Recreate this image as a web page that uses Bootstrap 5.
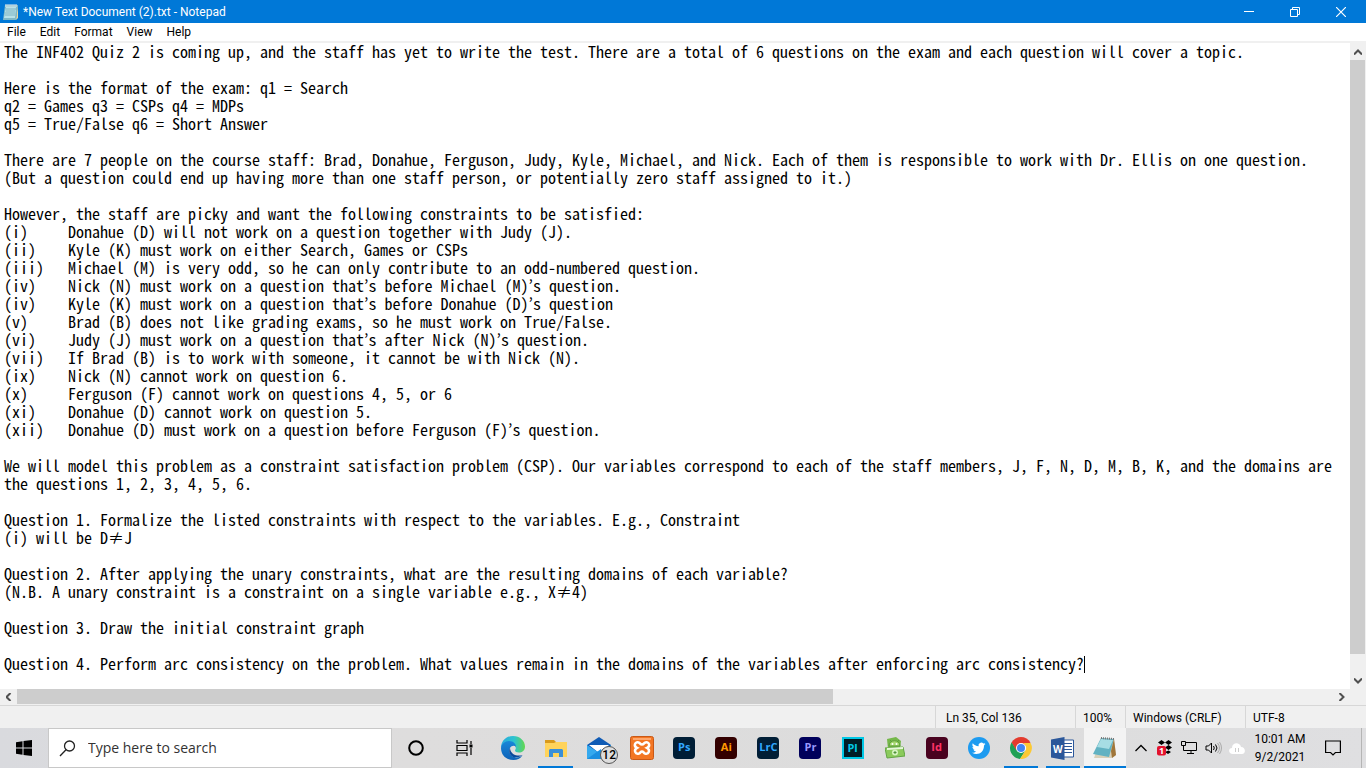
<!DOCTYPE html>
<html lang="en">
<head>
<meta charset="utf-8">
<meta name="viewport" content="width=device-width, initial-scale=1">
<title>*New Text Document (2).txt - Notepad</title>
<link href="https://cdn.jsdelivr.net/npm/bootstrap@5.3.0/dist/css/bootstrap.min.css" rel="stylesheet">
<style>
  body { font-family: Roboto, "Noto Sans", sans-serif; font-size: 12px; line-height: 16px; color: #000; background: #fff; }
  button { border: 0; background: transparent; padding: 0; color: inherit; }
  svg { display: block; flex: none; }
  .title-bar { height: 23px; background: #0078d7; color: #fff; padding: 0 2px 0 3px; }
  .title-bar h1 { font-size: 12px; line-height: 16px; font-weight: 400; margin: 0 0 0 4px; }
  .win-btn { width: 46px; height: 23px; display: grid; place-items: center; }
  .menu-bar { height: 20px; border-bottom: 2px solid #f0f0f0; padding-left: 7px; gap: 14px; }
  .menu-bar button { line-height: 18px; }
  .page-text { resize: none; border: 0; outline: 0; padding: 0 0 0 4px; margin: -1px 0 0; overflow: hidden; white-space: pre; tab-size: 8;
    font-family: "Noto Sans Mono CJK KR", "Noto Sans Mono CJK SC", "DejaVu Sans Mono", monospace; font-size: 16px; line-height: 18px; font-feature-settings: "hwid"; color: #000; background: #fff; }
  .caret { position: absolute; left: 1084px; top: 613px; width: 1px; height: 17px; background: #000; }
  .bar-y { width: 16px; background: #f0f0f0; padding-right: 1px; }
  .bar-x { height: 16px; background: #f0f0f0; padding-right: 16px; }
  .arrow { width: 17px; height: 17px; display: grid; place-items: center; flex: none; }
  .bar-y .arrow { width: 15px; }
  .bar-x .arrow { height: 15px; }
  .thumb { background: #cdcdcd; }
  .bar-y .thumb { height: 97%; }
  .bar-x .thumb { width: 62%; height: 15px; }
  .status-bar { height: 23px; background: #f0f0f0; border-top: 1px solid #d7d7d7; padding-right: 1px; }
  .status-bar span { border-left: 1px solid #d7d7d7; padding-left: 7px; width: 120px; line-height: 24px; }
  .status-bar .cell-pos { width: 140px; padding-left: 10px; }
  .status-bar .cell-zoom { width: 50px; }
  .task-bar { height: 40px; background: linear-gradient(90deg, #d9dade, #dedddd 30%, #dcdcdc 70%, #dfdfe1); }
  .task-btn { width: 48px; height: 40px; display: grid; place-items: center; flex: none; }
  .search-box { width: 344px; border: 1px solid #c8c8c8; background: #fff; padding-left: 10px; gap: 12px; }
  .search-box input { border: 0; outline: 0; background: transparent; font-family: "Open Sans", sans-serif; font-size: 14px; line-height: 20px; padding: 0; width: 240px; }
  .search-box input::placeholder { color: #333; opacity: 1; }
  .app-list { margin-left: 3px; }
  .app-btn { flex: 1 1 42px; height: 40px; display: grid; place-items: center; position: relative; }
  .wide-app { flex-basis: 43px; }
  .open-app::after { content: ""; position: absolute; left: 4px; right: 4px; bottom: 0; height: 2px; background: #0078d7; }
  .active-app { background: #f3f3f3; }
  .active-app::after { left: 0; right: 0; }
  .tile { width: 22px; height: 22px; border-radius: 4px; font-family: "Open Sans", sans-serif; font-weight: 700; font-size: 11px; line-height: 20px; text-align: center; }
  .tile-ps { background: #001e36; color: #31a8ff; }
  .tile-ai { background: #330000; color: #ff9a00; }
  .tile-pr { background: #00005b; color: #9999ff; }
  .tile-pl { background: #001d26; color: #00c8e6; border: 2px solid #00c8e6; border-radius: 0; line-height: 17px; }
  .tile-id { background: #49021f; color: #ff3366; }
  .mail-count { position: absolute; right: 2px; bottom: 4px; width: 18px; height: 18px; border: 1px solid #555; border-radius: 50%; background: #ddd; font-size: 12px; line-height: 16px; text-align: center; font-weight: 500; }
  .tray { padding-left: 3px; }
  .tray-btn { width: 24px; height: 40px; display: grid; place-items: center; position: relative; }
  .clock { width: 62px; line-height: 18px; text-align: center; }
  .notice-btn { width: 44px; }
  .desk-btn { width: 5px; margin-left: 6px; height: 40px; border-left: 1px solid #b5b5b5; }
</style>
</head>
<body>
<div class="d-flex flex-column vh-100 overflow-hidden">
  <header class="title-bar d-flex align-items-center">
    <svg width="16" height="18" viewBox="0 0 16 18"><path d="M2 2h13l-2 15H0z" fill="#7fb9c8"/><path d="M3 4h10l-1 11H1z" fill="#b9e2e9"/><path d="M3 6h10M3 8h9M2 10h10M2 12h10" stroke="#7db3c2"/><path d="M15 2v13l-2 2z" fill="#e5d6a0"/><path d="M3 1v3M5 1v3M7 1v3M9 1v3M11 1v3M13 1v3" stroke="#e9eef0"/></svg>
    <h1>*New Text Document (2).txt - Notepad</h1>
    <div class="d-flex ms-auto">
      <button class="win-btn" aria-label="Minimize"><svg width="10" height="10"><path d="M0 4.500h10" stroke="#fff"/></svg></button>
      <button class="win-btn" aria-label="Restore"><svg width="10" height="10" fill="none" stroke="#fff"><path d="M.5 2.500h7v7h-7zM2.500 2.500v-2h7v7h-2"/></svg></button>
      <button class="win-btn" aria-label="Close"><svg width="10" height="10"><path d="M0 0l10 10M10 0L0 10" stroke="#fff" stroke-width="1.200"/></svg></button>
    </div>
  </header>
  <nav class="menu-bar d-flex align-items-center" aria-label="Menu">
    <button>File</button><button>Edit</button><button>Format</button><button>View</button><button>Help</button>
  </nav>
  <main class="d-flex flex-grow-1 overflow-hidden position-relative">
    <textarea class="page-text flex-grow-1" aria-label="Document text" spellcheck="false" wrap="off">The INF402 Quiz 2 is coming up, and the staff has yet to write the test. There are a total of 6 questions on the exam and each question will cover a topic.

Here is the format of the exam: q1 = Search
q2 = Games q3 = CSPs q4 = MDPs
q5 = True/False q6 = Short Answer

There are 7 people on the course staff: Brad, Donahue, Ferguson, Judy, Kyle, Michael, and Nick. Each of them is responsible to work with Dr. Ellis on one question.
(But a question could end up having more than one staff person, or potentially zero staff assigned to it.)

However, the staff are picky and want the following constraints to be satisfied:
(i)&#9;Donahue (D) will not work on a question together with Judy (J).
(ii)&#9;Kyle (K) must work on either Search, Games or CSPs
(iii)&#9;Michael (M) is very odd, so he can only contribute to an odd-numbered question.
(iv)&#9;Nick (N) must work on a question that’s before Michael (M)’s question.
(iv)&#9;Kyle (K) must work on a question that’s before Donahue (D)’s question
(v)&#9;Brad (B) does not like grading exams, so he must work on True/False.
(vi)&#9;Judy (J) must work on a question that’s after Nick (N)’s question.
(vii)&#9;If Brad (B) is to work with someone, it cannot be with Nick (N).
(ix)&#9;Nick (N) cannot work on question 6.
(x)&#9;Ferguson (F) cannot work on questions 4, 5, or 6
(xi)&#9;Donahue (D) cannot work on question 5.
(xii)&#9;Donahue (D) must work on a question before Ferguson (F)’s question.

We will model this problem as a constraint satisfaction problem (CSP). Our variables correspond to each of the staff members, J, F, N, D, M, B, K, and the domains are
the questions 1, 2, 3, 4, 5, 6.

Question 1. Formalize the listed constraints with respect to the variables. E.g., Constraint
(i) will be D≠J

Question 2. After applying the unary constraints, what are the resulting domains of each variable?
(N.B. A unary constraint is a constraint on a single variable e.g., X≠4)

Question 3. Draw the initial constraint graph

Question 4. Perform arc consistency on the problem. What values remain in the domains of the variables after enforcing arc consistency?</textarea>
    <span class="caret"></span>
    <div class="bar-y d-flex flex-column">
      <button class="arrow" aria-label="Scroll up"><svg width="8" height="6"><path d="M0 5.500L4 1.500l4 4" fill="none" stroke="#505050" stroke-width="2"/></svg></button>
      <div class="flex-grow-1"><div class="thumb"></div></div>
      <button class="arrow" aria-label="Scroll down"><svg width="8" height="6"><path d="M0 .5l4 4 4-4" fill="none" stroke="#505050" stroke-width="2"/></svg></button>
    </div>
  </main>
  <div class="bar-x d-flex">
    <button class="arrow" aria-label="Scroll left"><svg width="6" height="8"><path d="M4.500 0l-4 4 4 4" fill="none" stroke="#505050" stroke-width="2"/></svg></button>
    <div class="flex-grow-1"><div class="thumb"></div></div>
    <button class="arrow" aria-label="Scroll right"><svg width="6" height="8"><path d="M.5 0l4 4-4 4" fill="none" stroke="#505050" stroke-width="2"/></svg></button>
  </div>
  <div class="status-bar d-flex justify-content-end">
    <span class="cell-pos">Ln 35, Col 136</span><span class="cell-zoom">100%</span><span>Windows (CRLF)</span><span>UTF-8</span>
  </div>
  <footer class="task-bar d-flex">
    <button class="task-btn" aria-label="Start"><svg width="16" height="16"><path d="M0 2.200L6.500 1.300V7.500H0zM7.500 1.100L16 0v7.500H7.500zM0 8.500h6.500v6.200L0 13.800zM7.500 8.500H16V16l-8.500-1.100z"/></svg></button>
    <label class="search-box d-flex align-items-center">
      <svg width="17" height="17" fill="none" stroke="#222" stroke-width="1.300"><circle cx="10.500" cy="6" r="5"/><path d="M7 9.700L1 16"/></svg>
      <input type="text" placeholder="Type here to search" aria-label="Type here to search">
    </label>
    <button class="task-btn" aria-label="Cortana"><svg width="16" height="16"><circle cx="8" cy="8" r="6.800" fill="none" stroke="#000" stroke-width="2"/></svg></button>
    <button class="task-btn" aria-label="Task View"><svg width="17" height="16" fill="none" stroke="#000" stroke-width="1.200"><path d="M1 0v3h10V0M1 5.500h10v5H1zM1 16v-3h10v3M15 1v3M15 8v7"/><path d="M13.500 4.500h3v3h-3z" fill="#000" stroke="none"/></svg></button>
    <div class="app-list d-flex flex-grow-1">
      <button class="app-btn wide-app" aria-label="Edge"><svg width="24" height="24" viewBox="0 0 24 24"><defs><linearGradient id="eg" x1="0" x2="1"><stop offset="0" stop-color="#2aa9dc"/><stop offset=".55" stop-color="#2dc3d0"/><stop offset="1" stop-color="#62d84e"/></linearGradient><linearGradient id="eb" x2="0" y2="1"><stop stop-color="#1887d8"/><stop offset="1" stop-color="#0f62b8"/></linearGradient></defs><path d="M0 12C0 5 5 0 12 0s12 5 12 10.500c0 4-3 6-6 6-2.500 0-4-1-4-2 0-.700.8-1 .8-2.500 0-2-1.800-4-4.800-4C5 8 1 9 0 12z" fill="url(#eg)"/><path d="M0 12c.5-4 4-7 8-7 4.500 0 7 3 7 6-1.500-2-4.500-1.500-6 1-2 4 .5 9 6 9.500 3 .2 5-1 6.500-2-2 3-5.500 4.500-9 4.500C5 24 0 19 0 12z" fill="url(#eb)"/><path d="M9 12c-2.500 4 1 10 7 9.300 2-.2 4-1 5.500-2.300-4 1.500-12 .5-12.500-7z" fill="#0b4a9c"/></svg></button>
      <button class="app-btn wide-app open-app" aria-label="File Explorer"><svg width="22" height="19"><path d="M0 1h9l2 2h10v5H0z" fill="#d99a1c"/><path d="M0 4h9l2-1h11v15H0z" fill="#ffd35b"/><path d="M4 18v-7l1-1h12l1 1v7h-4v-4H8v4z" fill="#3a8fd8"/></svg></button>
      <button class="app-btn wide-app" aria-label="Mail, 12 new"><svg width="24" height="24"><path d="M0 9L12 1l12 8v14H0z" fill="#0f5bb5"/><path d="M2 9h20L12 17z" fill="#fff"/><path d="M0 9l14 9 10-9v14H0z" fill="#35a9ee"/><path d="M0 23L14 13l3 10z" fill="#1c8fe0"/></svg><span class="mail-count">12</span></button>
      <button class="app-btn wide-app" aria-label="XAMPP"><svg width="24" height="24"><rect x=".5" y=".5" width="23" height="23" rx="2" fill="#f37623" stroke="#c95816"/><path d="M3 2h18v2H3z" fill="#ffa66a"/><path d="M8.500 6.500c-4-1-5 4-1.500 5.500-3.500 2-2 6.500 2 5.500 1.500-.5 1.500-2 3-2s1.500 1.500 3 2c4 1 5.500-3.500 2-5.500 3.500-1.500 2.500-6.500-1.500-5.500-2 .5-1.500 2-3.500 2S10.500 7 8.500 6.500z" fill="none" stroke="#fff" stroke-width="2.500"/></svg></button>
      <button class="app-btn" aria-label="Photoshop"><span class="tile tile-ps">Ps</span></button>
      <button class="app-btn" aria-label="Illustrator"><span class="tile tile-ai">Ai</span></button>
      <button class="app-btn" aria-label="Lightroom Classic"><span class="tile tile-ps">LrC</span></button>
      <button class="app-btn" aria-label="Premiere Pro"><span class="tile tile-pr">Pr</span></button>
      <button class="app-btn" aria-label="Prelude"><span class="tile tile-pl">Pl</span></button>
      <button class="app-btn" aria-label="Android tool"><svg width="20" height="22"><path d="M2 2l9-2 5 4-1 8H3z" fill="#75b84a"/><path d="M4 9c0-7 11-7 11 0z" fill="#a5d86f" stroke="#5d9c3b"/><path d="M5 3l2 2M14 3l-2 2" stroke="#5d9c3b"/><circle cx="7.500" cy="7" r="1" fill="#fff"/><circle cx="11.500" cy="7" r="1" fill="#fff"/><path d="M0 11l18-1 2 9-18 2z" fill="#8bca5c" stroke="#62a544"/><path d="M2 11l16-1v2L2 13z" fill="#e6f7d9"/><circle cx="10" cy="15.500" r="3" fill="#d6f3c1"/><path d="M10 14v3M8.500 15.500h3" stroke="#4d9438"/></svg></button>
      <button class="app-btn" aria-label="InDesign"><span class="tile tile-id">Id</span></button>
      <button class="app-btn" aria-label="Twitter"><svg width="22" height="22" viewBox="0 0 22 22"><circle cx="11" cy="11" r="11" fill="#1d9bf0"/><path d="M17.500 7c-.5.2-1 .4-1.500.4.600-.3 1-.8 1.200-1.500-.6.300-1.200.6-1.800.7a2.800 2.800 0 0 0-4.800 2.600C8.200 9.100 6.100 8 4.800 6.300c-.8 1.400-.4 3 .9 3.900-.5 0-.9-.1-1.300-.4 0 1.400 1 2.600 2.300 2.800-.4.100-.8.1-1.300 0 .4 1.200 1.500 2 2.700 2-1.200 1-2.700 1.300-4.100 1.200 5.600 3.400 12.200-.2 12-7.200.6-.4 1.100-1 1.500-1.600z" fill="#fff"/></svg></button>
      <button class="app-btn open-app" aria-label="Chrome"><svg width="22" height="22" viewBox="0 0 22 22"><path d="M1.500 5.500A11 11 0 0 1 20.500 5.500L11 11z" fill="#e33b2e"/><path d="M1.500 5.500A11 11 0 0 0 10 22l5.500-8.500L11 11 6 13z" fill="#1fa055"/><path d="M20.600 6A11 11 0 0 1 10 22l5.500-8.500A5 5 0 0 0 11 6z" fill="#fcc934"/><path d="M1.500 5.500L6.200 13.600 11 11V6h9.500z" fill="#e33b2e"/><path d="M1.500 5.500l5 8L8 18 2 17z" fill="#1fa055"/><circle cx="11" cy="11" r="5" fill="#fff"/><circle cx="11" cy="11" r="4" fill="#4285f4"/></svg></button>
      <button class="app-btn open-app" aria-label="Word"><svg width="23" height="23" viewBox="0 0 23 23"><path d="M11 3h11.500v17H11z" fill="#fff" stroke="#2b579a"/><path d="M13 6.500h8M13 9.500h8M13 12.500h8M13 15.500h8" stroke="#2b579a"/><path d="M0 2.500L13.500 0v23L0 20.500z" fill="#2b579a"/><text x="2" y="15.500" fill="#fff" font-family="Open Sans" font-weight="700" font-size="10">W</text></svg></button>
      <button class="app-btn open-app active-app" aria-label="Notepad"><svg width="24" height="22"><path d="M8 1l13 1 2 16-4 3H1z" fill="#d8d0b8"/><path d="M8 1l13 1-5 18L0 17z" fill="#62b2c2"/><path d="M8 2l12 1-4 9-12-2z" fill="#a7dde4"/><path d="M21 2l2 16-4 3-1-7z" fill="#a0763a"/><path d="M8 1l13 1" stroke="#777" stroke-width="2" stroke-dasharray="1 1"/></svg></button>
    </div>
    <div class="tray d-flex align-items-center">
      <button class="tray-btn" aria-label="Show hidden icons"><svg width="12" height="8"><path d="M0.500 7L6 1.500 11.500 7" fill="none" stroke="#000" stroke-width="1.300"/></svg></button>
      <button class="tray-btn" aria-label="Dropbox, 1 notification"><svg width="16" height="16"><path d="M1 2.500L4.500 0 8 2.500 4.500 5zM8 2.500L11.500 0 15 2.500 11.500 5zM8 7.500L11.500 5 15 7.500l-3.500 2.500zM8 12l3.500-1.500L14 12l-3 2z"/><rect y="6" width="9" height="9.500" rx="2" fill="#e3122d"/><text x="2" y="14" fill="#fff" font-family="Open Sans" font-weight="700" font-size="9">1</text></svg></button>
      <button class="tray-btn" aria-label="Network"><svg width="16" height="14" fill="none" stroke="#000"><path d="M5 1.500h10.500v8H2.500V6M10 9.500v3M6 12.500h7M.5.5h4v4h-4zM2.500 4.500v2"/></svg></button>
      <button class="tray-btn" aria-label="Volume"><svg width="17" height="14" fill="none" stroke="#000"><path d="M1 5v4h2.500l3 3V2l-3 3z"/><path d="M8.500 5q1.500 2 0 4M10.500 3.500q3 3.500 0 7"/><path d="M12.500 2q4 5 0 10M14.500 1q4 6 0 12" stroke="#aaa"/></svg></button>
      <button class="tray-btn" aria-label="OneDrive, paused"><svg width="16" height="11"><path d="M4 11C-1 11-1 5 3 5c0-6 8-6 9-1 5 0 5 7 1 7z" fill="#fff"/><path d="M6.500 5v4M9.500 5v4" stroke="#ccc"/></svg></button>
      <div class="clock">10:01 AM<br>9/2/2021</div>
      <button class="tray-btn notice-btn" aria-label="Notifications"><svg width="16" height="16" fill="none" stroke="#000" stroke-width="1.200"><path d="M.6 1h14.800v11.500h-5L8 15l-2.400-2.500h-5z"/></svg></button>
      <button class="desk-btn" aria-label="Show desktop"></button>
    </div>
  </footer>
</div>
<script src="https://cdn.jsdelivr.net/npm/bootstrap@5.3.0/dist/js/bootstrap.bundle.min.js"></script>
</body>
</html>
